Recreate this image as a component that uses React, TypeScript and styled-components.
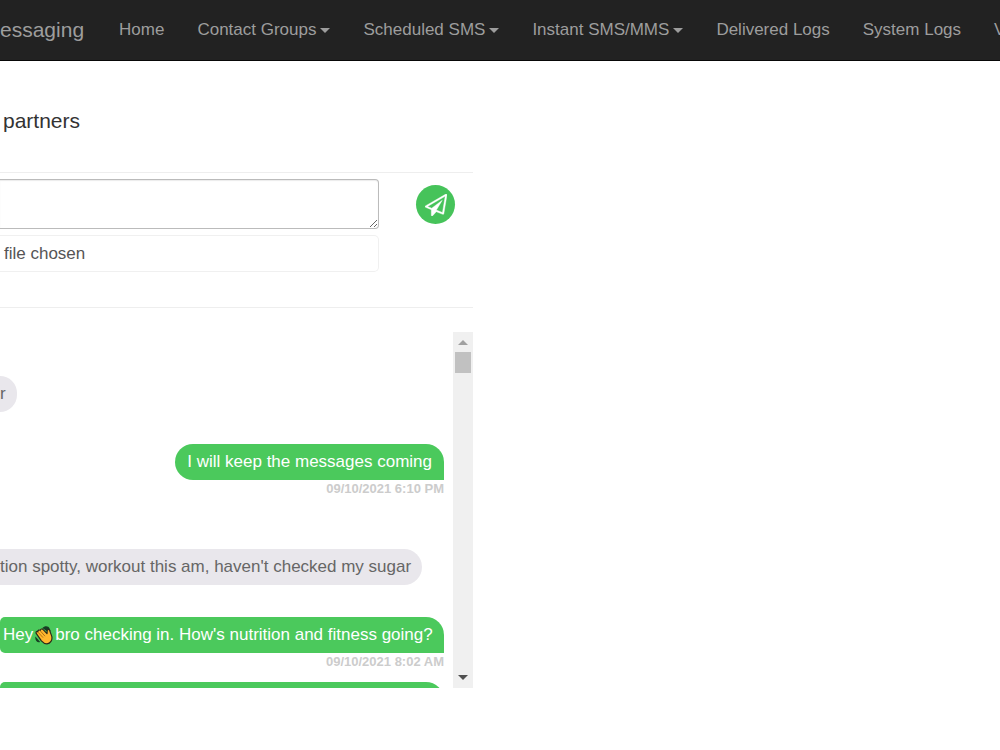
import React from "react";
import styled, { createGlobalStyle } from "styled-components";

const GlobalStyle = createGlobalStyle`
  * { box-sizing: border-box; }
  body {
    margin: 0;
    background: #fff;
    color: #333;
    font-family: "Liberation Sans", Arial, sans-serif;
    font-size: 17px;
    line-height: 24px;
    overflow-x: hidden;
  }
`;

const Navbar = styled.nav`
  display: flex;
  align-items: center;
  height: 61px;
  overflow: hidden;
  background: #222;
  border-bottom: 1px solid #080808;
  white-space: nowrap;
`;

const Brand = styled.a`
  flex: none;
  margin-right: 35px;
  color: #9d9d9d;
  font-size: 21px;
  text-decoration: none;
`;

const NavList = styled.ul`
  display: flex;
  gap: 33px;
  margin: 0;
  padding: 0;
  list-style: none;
`;

const NavLink = styled.a`
  display: flex;
  align-items: center;
  gap: 4px;
  color: #9d9d9d;
  text-decoration: none;
`;

const Caret = styled.span`
  border-top: 5px solid currentColor;
  border-left: 5px solid transparent;
  border-right: 5px solid transparent;
`;

const Panel = styled.main`
  width: 47.3%;
  min-width: 440px;
`;

const Title = styled.h4`
  margin: 0;
  padding: 48px 3px 39px;
  font-size: 21px;
  font-weight: 400;
  line-height: 24px;
`;

const Composer = styled.form`
  display: flex;
  justify-content: space-between;
  align-items: flex-start;
  margin: 0;
  padding: 6px 18px 35px 0;
  border-top: 1px solid #eee;
  border-bottom: 1px solid #eee;
`;

const Fields = styled.div`
  flex: 1;
  display: flex;
  flex-direction: column;
  gap: 6px;
  margin-right: 37px;
`;

const MessageBox = styled.textarea`
  display: block;
  width: 100%;
  height: 50px;
  padding: 6px 12px;
  border: 1px solid #bbb;
  border-left: 0;
  border-radius: 0 4px 4px 0;
  box-shadow: inset 0 1px 1px rgba(0, 0, 0, 0.08);
  font: inherit;
  resize: both;
`;

const FileField = styled.label`
  display: flex;
  align-items: center;
  height: 37px;
  padding-left: 4px;
  border: 1px solid #f0f0f0;
  border-left: 0;
  border-radius: 0 5px 5px 0;
  color: #555;
`;

const FileInput = styled.input`
  width: 0;
  height: 0;
  opacity: 0;
  overflow: hidden;
`;

const SendButton = styled.button`
  display: grid;
  place-items: center;
  width: 39px;
  height: 39px;
  margin: 6px 0 0;
  padding: 0;
  border: 0;
  border-radius: 50%;
  background: #46c35a;
  color: #fff;
`;

const Chat = styled.section`
  display: flex;
  height: 356px;
  margin-top: 24px;
  overflow: hidden;
`;

const Messages = styled.div`
  flex: 1;
  min-width: 0;
  display: flex;
  flex-direction: column;
  overflow: hidden;
  padding: 44px 9px 0 0;
  white-space: nowrap;
`;

const Received = styled.div`
  flex: none;
  align-self: flex-start;
  height: 36px;
  margin-bottom: 32px;
  padding: 6px 11px 6px 0;
  border-radius: 0 18px 18px 0;
  background: #e9e7ec;
  color: #666;
`;

const Sent = styled.div<{ $open?: boolean }>`
  flex: none;
  display: flex;
  align-items: center;
  align-self: ${(p) => (p.$open ? "stretch" : "flex-end")};
  gap: 2px;
  height: 36px;
  padding: 6px 12px 6px ${(p) => (p.$open ? "3px" : "12px")};
  border-radius: ${(p) => (p.$open ? "5px 18px 0 5px" : "18px 18px 0 18px")};
  background: #4bc95c;
  color: #fff;
`;

const Time = styled.time<{ $gap: number }>`
  flex: none;
  align-self: flex-end;
  margin-bottom: ${(p) => p.$gap}px;
  color: #ccc;
  font-size: 13px;
  font-weight: 700;
  line-height: 17px;
`;

const Scrollbar = styled.div`
  display: flex;
  flex-direction: column;
  align-items: center;
  width: 20px;
  background: #f0f0f0;
`;

const ScrollButton = styled.button<{ $color: string }>`
  display: grid;
  place-items: center;
  width: 20px;
  height: 20px;
  padding: 0;
  border: 0;
  background: none;
  color: ${(p) => p.$color};
`;

const ScrollThumb = styled.div`
  width: 16px;
  height: 21px;
  margin-bottom: auto;
  background: #c1c1c1;
`;

const Wave = styled.svg`
  flex: none;
  width: 18px;
  height: 20px;
`;

const links = [
  { label: "Home" },
  { label: "Contact Groups", menu: true },
  { label: "Scheduled SMS", menu: true },
  { label: "Instant SMS/MMS", menu: true },
  { label: "Delivered Logs" },
  { label: "System Logs" },
  { label: "V" },
];

const PlaneIcon = () => (
  <svg width="22" height="22" viewBox="0 0 1792 1792" aria-hidden="true">
    <path
      fill="currentColor"
      stroke="currentColor"
      strokeWidth="30"
      d="M1764 11q33 24 27 64l-256 1536q-5 29-32 45-14 8-31 8-11 0-24-5l-527-215-298 327q-18 21-47 21-14 0-23-4-19-7-30-23.5t-11-36.5v-452l-472-193q-37-14-40-55-3-39 32-59l1664-960q35-21 68 2zm-342 1499l221-1323-1434 827 336 137 863-639-478 797z"
    />
  </svg>
);

const WaveIcon = () => (
  <Wave viewBox="0 0 18 20" role="img" aria-label="waving hand">
    <path fill="#173d24" d="M7.5 3C9.5 .4 13.6 .6 14.6 3.4L16 6.4 11.5 6ZM.4 11.6 5.2 17C2.6 18.4 -.4 15.5 .4 11.6Z" />
    <path
      fill="#ffb72e"
      stroke="#2b2a1b"
      strokeWidth="1.2"
      strokeLinejoin="round"
      d="M1.2 8.4C.6 7 1.8 6 2.8 6.8 2.8 5 4.4 4.6 5.2 5.4 5.8 3.6 7.4 3.6 8.4 4.8L12 8.6 12.2 5.6C12.4 3.8 14.2 4 14.6 5.4L16.8 11.4C17.6 15.2 15.4 18.6 12 18.8 9.6 18.9 8 17.6 6.4 15.8Z"
    />
    <path fill="none" stroke="#a86a12" strokeWidth=".9" d="M3 7.2 8 12.6M5.4 6 10 11.2" />
  </Wave>
);

const Arrow = ({ down }: { down?: boolean }) => (
  <svg width="10" height="6" viewBox="0 0 10 6" aria-hidden="true">
    <path fill="currentColor" d={down ? "M0 0H10L5 5Z" : "M0 6H10L5 1Z"} />
  </svg>
);

export default function App() {
  return (
    <>
      <GlobalStyle />
      <Navbar>
        <Brand href="#">essaging</Brand>
        <NavList>
          {links.map((l) => (
            <li key={l.label}>
              <NavLink href="#">
                {l.label}
                {l.menu && <Caret />}
              </NavLink>
            </li>
          ))}
        </NavList>
      </Navbar>
      <Panel>
        <Title>partners</Title>
        <Composer onSubmit={(e) => e.preventDefault()}>
          <Fields>
            <MessageBox aria-label="Message" />
            <FileField>
              file chosen
              <FileInput type="file" />
            </FileField>
          </Fields>
          <SendButton type="submit" aria-label="Send">
            <PlaneIcon />
          </SendButton>
        </Composer>
        <Chat>
          <Messages>
            <Received>r</Received>
            <Sent>I will keep the messages coming</Sent>
            <Time $gap={52}>09/10/2021 6:10 PM</Time>
            <Received>tion spotty, workout this am, haven't checked my sugar</Received>
            <Sent $open>
              <span>Hey</span>
              <WaveIcon />
              <span>bro checking in. How's nutrition and fitness going?</span>
            </Sent>
            <Time $gap={12}>09/10/2021 8:02 AM</Time>
            <Sent $open />
          </Messages>
          <Scrollbar>
            <ScrollButton type="button" aria-label="Scroll up" $color="#a0a0a0">
              <Arrow />
            </ScrollButton>
            <ScrollThumb />
            <ScrollButton type="button" aria-label="Scroll down" $color="#505050">
              <Arrow down />
            </ScrollButton>
          </Scrollbar>
        </Chat>
      </Panel>
    </>
  );
}
